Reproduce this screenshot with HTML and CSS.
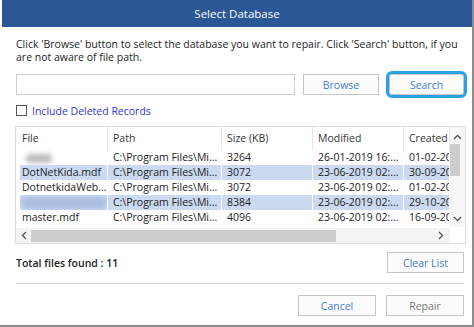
FILE: index.html
```html
<!DOCTYPE html>
<html lang="en">
<head>
    <meta charset="UTF-8">
    <meta name="viewport" content="width=device-width, initial-scale=1.0">
    <title>Select Database</title>
    <link rel="stylesheet" href="styles.css">
</head>
<body>

    <div class="window">
        <div class="titlebar">Select Database</div>

        <div class="content">
            <p class="intro">Click 'Browse' button to select the database you want to repair. Click 'Search' button, if you are not aware of file path.</p>

            <div class="path-row">
                <input class="path-input" type="text">
                <button class="btn browse">Browse</button>
                <button class="btn search">Search</button>
            </div>

            <label class="deleted"><span class="checkbox"></span>Include Deleted Records</label>

            <div class="list">
                <div class="rows">
                    <div class="cell head">File</div>
                    <div class="cell head">Path</div>
                    <div class="cell head">Size (KB)</div>
                    <div class="cell head">Modified</div>
                    <div class="cell head">Created</div>

                    <div class="cell"><span class="blur gray"></span></div>
                    <div class="cell">C:\Program Files\Mi...</div>
                    <div class="cell">3264</div>
                    <div class="cell">26-01-2019 16:...</div>
                    <div class="cell">01-02-20</div>

                    <div class="cell sel">DotNetKida.mdf</div>
                    <div class="cell sel">C:\Program Files\Mi...</div>
                    <div class="cell sel">3072</div>
                    <div class="cell sel">23-06-2019 02:...</div>
                    <div class="cell sel">30-09-20</div>

                    <div class="cell">DotnetkidaWeb...</div>
                    <div class="cell">C:\Program Files\Mi...</div>
                    <div class="cell">3072</div>
                    <div class="cell">23-06-2019 02:...</div>
                    <div class="cell">01-02-20</div>

                    <div class="cell sel"><span class="blur blue"></span></div>
                    <div class="cell sel">C:\Program Files\Mi...</div>
                    <div class="cell sel">8384</div>
                    <div class="cell sel">23-06-2019 02:...</div>
                    <div class="cell sel">29-10-20</div>

                    <div class="cell">master.mdf</div>
                    <div class="cell">C:\Program Files\Mi...</div>
                    <div class="cell">4096</div>
                    <div class="cell">23-06-2019 02:...</div>
                    <div class="cell">16-09-20</div>
                </div>

                <div class="vscroll">
                    <svg class="arrow" width="9" height="6" viewBox="0 0 9 6"><polyline points="1,5 4.5,1.5 8,5" fill="none" stroke="#555" stroke-width="1.3"/></svg>
                    <div class="vthumb"></div>
                    <svg class="arrow down" width="9" height="6" viewBox="0 0 9 6"><polyline points="1,1 4.5,4.5 8,1" fill="none" stroke="#555" stroke-width="1.3"/></svg>
                </div>

                <div class="hscroll">
                    <svg class="arrow" width="6" height="9" viewBox="0 0 6 9"><polyline points="5,1 1.5,4.5 5,8" fill="none" stroke="#555" stroke-width="1.3"/></svg>
                    <div class="htrack"><div class="hthumb"></div></div>
                    <svg class="arrow" width="6" height="9" viewBox="0 0 6 9"><polyline points="1,1 4.5,4.5 1,8" fill="none" stroke="#555" stroke-width="1.3"/></svg>
                </div>
                <div class="corner"></div>
            </div>

            <div class="summary">
                <span class="total">Total files found : 11</span>
                <button class="btn">Clear List</button>
            </div>

            <div class="actions">
                <button class="btn">Cancel</button>
                <button class="btn disabled">Repair</button>
            </div>
        </div>
    </div>

</body>
</html>
```

FILE: styles.css
```css
body {
    margin: 0;
    background: #fff;
    font-family: 'Open Sans', 'Noto Sans', sans-serif;
    font-size: 10.5px;
    color: #222;
}
.window {
    width: 472px;
    height: 325px;
    border-right: 2px solid #8c8c8c;
    border-bottom: 2px solid #8c8c8c;
    background: #fff;
}
.titlebar {
    height: 27px;
    margin-left: 2px;
    background: #2b5797;
    color: #fff;
    font-size: 11.5px;
    line-height: 27px;
    text-align: center;
}
.content {
    padding: 0 8px 0 16px;
}
.intro {
    margin: 11px 0 0;
    line-height: 13px;
    color: #1e1e1e;
}
.path-row {
    display: flex;
    align-items: center;
    margin-top: 10px;
}
.path-input {
    flex: 1;
    height: 21px;
    box-sizing: border-box;
    border: 1px solid #cfcfcf;
    margin: 0 8px 0 0;
    padding: 0;
}
.btn {
    height: 21px;
    width: 77px;
    box-sizing: border-box;
    border: 1px solid #c6c6c6;
    background: #fcfcfc;
    color: #3c7dd6;
    font-family: inherit;
    font-size: 10.5px;
    padding: 0;
}
.browse {
    width: 76px;
}
.search {
    margin-left: 10px;
    width: 75px;
    outline: 3px solid #27a3e3;
    outline-offset: 0;
    border-radius: 3px;
    box-shadow: 0 0 0 1px #bfe3f6;
}
.deleted {
    display: flex;
    align-items: center;
    margin-top: 10px;
    height: 11px;
    color: #3436c9;
}
.checkbox {
    width: 9px;
    height: 9px;
    border: 1px solid #555;
    margin-right: 5px;
}
.list {
    display: grid;
    grid-template-columns: 1fr 15px;
    grid-template-rows: 100px 16px;
    margin: 10px -2px 0 -1px;
    border: 1px solid #dedede;
}
.rows {
    display: grid;
    grid-template-columns: 88px 114px 91px 91px 1fr;
    grid-template-rows: 23px repeat(5, 15px);
    padding-left: 4px;
    overflow: hidden;
}
.cell {
    padding-left: 5px;
    border-right: 1px solid #fff;
    white-space: nowrap;
    overflow: hidden;
    line-height: 15px;
}
.cell:nth-child(5n+1) {
    padding-left: 2px;
}
.head {
    line-height: 23px;
    color: #333;
    border-right-color: #e6e6e6;
}
.sel {
    background: #cbdaf1;
}
.blur {
    display: inline-block;
    height: 9px;
    vertical-align: middle;
    filter: blur(2.5px);
    border-radius: 4px;
}
.blur.gray {
    width: 26px;
    margin-left: 4px;
    background: #bdbdbd;
}
.blur.blue {
    width: 84px;
    height: 12px;
    background: #a9bde0;
}
.vscroll {
    display: flex;
    flex-direction: column;
    align-items: center;
    background: #f7f7f7;
    padding: 7px 0 5px;
}
.vthumb {
    width: 10px;
    height: 32px;
    margin: 4px 5px 0 0;
    background: #cdcdcd;
}
.arrow {
    display: block;
    flex-shrink: 0;
}
.down {
    margin-top: auto;
}
.hscroll {
    display: flex;
    align-items: center;
    gap: 4px;
    padding: 0 6px 0 5px;
    background: #f4f4f4;
    border-top: 1px solid #fff;
}
.htrack {
    flex: 1;
}
.hthumb {
    width: 305px;
    height: 12px;
    background: #cdcdcd;
}
.corner {
    background: #fff;
}
.summary {
    display: flex;
    justify-content: space-between;
    align-items: center;
    margin-top: 8px;
    padding-bottom: 10px;
    border-bottom: 1px solid #d4d4d4;
}
.total {
    font-weight: 600;
    color: #222;
}
.actions {
    display: flex;
    justify-content: flex-end;
    gap: 10px;
    margin-top: 11px;
}
.actions .btn {
    width: 78px;
}
.disabled {
    color: #777;
}
```
